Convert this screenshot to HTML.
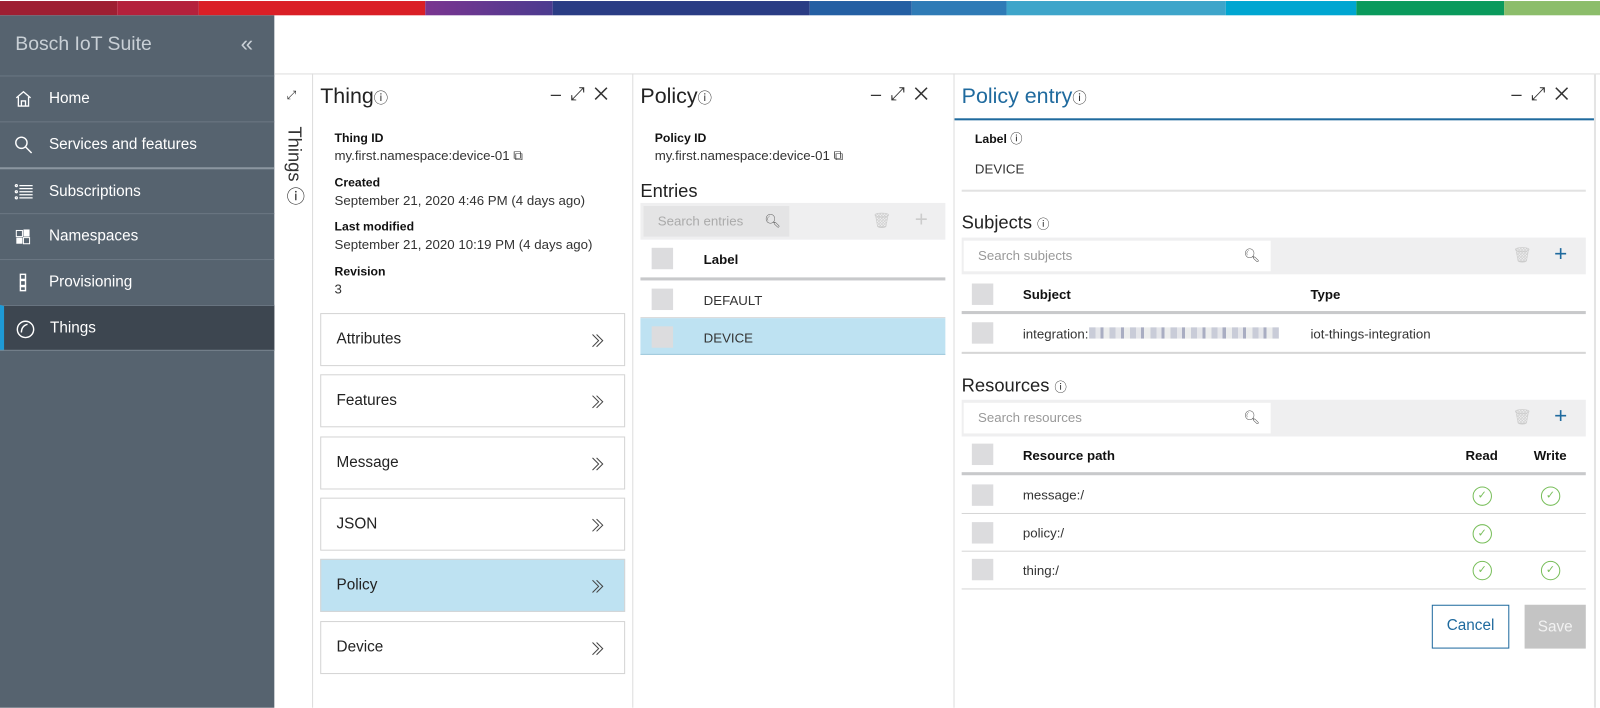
<!DOCTYPE html>
<html><head><meta charset="utf-8"><style>
*{box-sizing:border-box;margin:0;padding:0}
html,body{width:1600px;height:708px;overflow:hidden;background:#fff;font-family:"Liberation Sans",sans-serif;color:#222}
#w{position:absolute;left:0;top:0;width:1569px;height:694px;transform:scale(1.0198);transform-origin:0 0}
.a{position:absolute}
.bar div{position:absolute;top:1px;height:14px}
.nav{position:absolute;left:0;width:269px;height:45px;border-top:1px solid #6b7783;color:#fff;font-size:15px;line-height:44px;padding-left:48px}
.nav svg{position:absolute;left:14px;top:13px}
.lbl{font-size:12px;font-weight:bold;color:#111}
.val{font-size:13px;color:#333}
.card{position:absolute;left:314px;width:299px;height:52px;border:1px solid #d4d4d4;font-size:15px;line-height:50px;padding-left:15px;color:#222}
.card svg{position:absolute;right:20px;top:19px}
.hdr{font-size:21px;color:#222}
.ic{font-size:14px;color:#333}
.cb{position:absolute;width:21px;height:21px;background:#dcdcde}
.srch{position:absolute;background:#fff;height:30px;font-size:13px;color:#999;line-height:30px;padding-left:14px}
.th{font-size:13px;font-weight:bold;color:#111}
.td{font-size:13px;color:#333}
.hl{position:absolute;height:1px;background:#d6d6d6}
.ok{position:absolute;width:19px;height:19px;border:1.5px solid #78be5a;border-radius:50%;color:#78be5a;font-size:11px;text-align:center;line-height:16px}
</style></head><body><div id="w">
<div class="bar">
<div style="left:0;width:115px;background:#9e1f32"></div>
<div style="left:115px;width:80px;background:#b4213c"></div>
<div style="left:195px;width:222px;background:#da1f26"></div>
<div style="left:417px;width:125px;background:linear-gradient(90deg,#7a3590,#4b3b8f)"></div>
<div style="left:542px;width:252px;background:#2a3c84"></div>
<div style="left:794px;width:100px;background:#245fa3"></div>
<div style="left:894px;width:93px;background:#2f7bb6"></div>
<div style="left:987px;width:215px;background:#3ea5ca"></div>
<div style="left:1202px;width:128px;background:#00a6d1"></div>
<div style="left:1330px;width:145px;background:#0a9a5c"></div>
<div style="left:1475px;width:94px;background:#8cbd6b"></div>
</div>
<div class="a" style="left:0;top:15px;width:269px;height:679px;background:#56636f"></div>
<div class="a" style="left:15px;top:33px;font-size:19px;color:#c9d0d6">Bosch IoT Suite</div>
<div class="a" style="left:236px;top:30px;font-size:22px;color:#c9d0d6">«</div>
<div class="nav" style="top:74px"><svg width="18" height="18" viewBox="0 0 18 18" fill="none" stroke="#fff" stroke-width="1.3"><path d="M2 8L9 2l7 6M4 7v9h10V7M7 16v-5h4v5"/></svg>Home</div>
<div class="nav" style="top:119px"><svg width="20" height="20" viewBox="0 0 20 20" fill="none" stroke="#fff" stroke-width="1.4"><circle cx="7" cy="7" r="5.5"/><path d="M11 11l6 6"/></svg>Services and features</div>
<div class="nav" style="top:164px;border-top:2px solid #8b96a0"><svg width="20" height="18" viewBox="0 0 20 18" fill="none" stroke="#fff" stroke-width="1.2"><circle cx="2" cy="3" r="1"/><circle cx="2" cy="9" r="1"/><circle cx="2" cy="15" r="1"/><path d="M5 3h13M5 6h13M5 9h13M5 12h13M5 15h13"/></svg>Subscriptions</div>
<div class="nav" style="top:209px"><svg width="18" height="18" viewBox="0 0 18 18" fill="#fff"><rect x="2" y="3" width="6" height="6" fill="none" stroke="#fff"/><rect x="9" y="2" width="6" height="7"/><rect x="2" y="10" width="6" height="6"/><rect x="9" y="10" width="6" height="6" fill="none" stroke="#fff"/></svg>Namespaces</div>
<div class="nav" style="top:254px"><svg width="18" height="18" viewBox="0 0 18 18" fill="none" stroke="#fff" stroke-width="1.4"><rect x="6" y="1" width="5" height="5"/><rect x="6" y="7" width="5" height="5"/><rect x="6" y="13" width="5" height="4"/></svg>Provisioning</div>
<div class="nav" style="top:299px;background:#3d4650;border-left:4px solid #1e9ad6;padding-left:45px"><svg width="20" height="20" viewBox="0 0 20 20" fill="none" stroke="#fff" stroke-width="1.4" style="left:11px"><circle cx="10" cy="10" r="8"/><path d="M6 13c0-4 2-7 6-8"/></svg>Things</div>
<div class="a" style="left:0;top:343px;width:269px;height:1px;background:#7d8994"></div>
<div class="a" style="left:269px;top:72px;width:1300px;height:1px;background:#ddd"></div>
<div class="a" style="left:306px;top:72px;width:1px;height:622px;background:#ddd"></div>
<div class="a" style="left:620px;top:72px;width:1px;height:622px;background:#ddd"></div>
<div class="a" style="left:935px;top:72px;width:1px;height:622px;background:#ddd"></div>
<div class="a" style="left:1563px;top:72px;width:2px;height:622px;background:#e4e4e4"></div>
<div class="a" style="left:281px;top:86px;font-size:12px;color:#333">⤢</div>
<div class="a" style="left:276px;top:124px;font-size:18px;color:#333;writing-mode:vertical-rl">Things ⓘ</div>
<div class="a hdr" style="left:314px;top:83px">Thing<span class="ic">ⓘ</span></div>
<div class="a" style="left:540px;top:82px;font-size:18px;color:#333;letter-spacing:9px">–⤢✕</div>
<div class="a lbl" style="left:328px;top:128px">Thing ID</div>
<div class="a val" style="left:328px;top:145px">my.first.namespace:device-01 ⧉</div>
<div class="a lbl" style="left:328px;top:172px">Created</div>
<div class="a val" style="left:328px;top:189px">September 21, 2020 4:46 PM (4 days ago)</div>
<div class="a lbl" style="left:328px;top:215px">Last modified</div>
<div class="a val" style="left:328px;top:232px">September 21, 2020 10:19 PM (4 days ago)</div>
<div class="a lbl" style="left:328px;top:259px">Revision</div>
<div class="a val" style="left:328px;top:276px">3</div>
<div class="card" style="top:307px">Attributes<svg width="12" height="14" viewBox="0 0 12 14" fill="none" stroke="#444"><path d="M1 1l6 6-6 6M5 1l6 6-6 6"/></svg></div>
<div class="card" style="top:367px">Features<svg width="12" height="14" viewBox="0 0 12 14" fill="none" stroke="#444"><path d="M1 1l6 6-6 6M5 1l6 6-6 6"/></svg></div>
<div class="card" style="top:428px">Message<svg width="12" height="14" viewBox="0 0 12 14" fill="none" stroke="#444"><path d="M1 1l6 6-6 6M5 1l6 6-6 6"/></svg></div>
<div class="card" style="top:488px">JSON<svg width="12" height="14" viewBox="0 0 12 14" fill="none" stroke="#444"><path d="M1 1l6 6-6 6M5 1l6 6-6 6"/></svg></div>
<div class="card" style="top:548px;background:#bee2f2">Policy<svg width="12" height="14" viewBox="0 0 12 14" fill="none" stroke="#444"><path d="M1 1l6 6-6 6M5 1l6 6-6 6"/></svg></div>
<div class="card" style="top:609px">Device<svg width="12" height="14" viewBox="0 0 12 14" fill="none" stroke="#444"><path d="M1 1l6 6-6 6M5 1l6 6-6 6"/></svg></div>
<div class="a hdr" style="left:628px;top:83px">Policy<span class="ic">ⓘ</span></div>
<div class="a" style="left:854px;top:82px;font-size:18px;color:#333;letter-spacing:9px">–⤢✕</div>
<div class="a lbl" style="left:642px;top:128px">Policy ID</div>
<div class="a val" style="left:642px;top:145px">my.first.namespace:device-01 ⧉</div>
<div class="a" style="left:628px;top:177px;font-size:18px">Entries</div>
<div class="a" style="left:628px;top:199px;width:299px;height:36px;background:#efeff0"></div>
<div class="srch" style="left:631px;top:202px;width:143px;background:#e4e4e5;color:#aaa">Search entries <span style="position:absolute;right:8px;color:#666">🔍︎</span></div>
<div class="a" style="left:855px;top:207px;font-size:15px;color:#ccc">🗑︎</div>
<div class="a" style="left:897px;top:202px;font-size:22px;color:#ccc">+</div>
<div class="cb" style="left:639px;top:243px"></div>
<div class="a th" style="left:690px;top:247px">Label</div>
<div class="a" style="left:628px;top:272px;width:299px;height:3px;background:#c8c9cb"></div>
<div class="cb" style="left:639px;top:283px"></div>
<div class="a td" style="left:690px;top:287px">DEFAULT</div>
<div class="hl" style="left:628px;top:311px;width:299px"></div>
<div class="a" style="left:628px;top:312px;width:299px;height:36px;background:#bee2f2;border-bottom:1px solid #9fc9dc"></div>
<div class="cb" style="left:639px;top:320px"></div>
<div class="a td" style="left:690px;top:324px">DEVICE</div>
<div class="a hdr" style="left:943px;top:83px;color:#1f6a9e">Policy entry<span class="ic" style="color:#333">ⓘ</span></div>
<div class="a" style="left:1482px;top:82px;font-size:18px;color:#333;letter-spacing:9px">–⤢✕</div>
<div class="a" style="left:936px;top:116px;width:627px;height:2px;background:#1f6a9e"></div>
<div class="a lbl" style="left:956px;top:127px">Label <span style="font-weight:normal">ⓘ</span></div>
<div class="a td" style="left:956px;top:158px">DEVICE</div>
<div class="a" style="left:943px;top:186px;width:612px;height:2px;background:#e2e2e2"></div>
<div class="a" style="left:943px;top:208px;font-size:18px">Subjects <span style="font-size:12px">ⓘ</span></div>
<div class="a" style="left:943px;top:233px;width:612px;height:36px;background:#efeff0"></div>
<div class="srch" style="left:945px;top:236px;width:301px">Search subjects <span style="position:absolute;right:10px;color:#555">🔍︎</span></div>
<div class="a" style="left:1483px;top:241px;font-size:15px;color:#ccc">🗑︎</div>
<div class="a" style="left:1524px;top:236px;font-size:22px;color:#1f6a9e">+</div>
<div class="cb" style="left:953px;top:278px"></div>
<div class="a th" style="left:1003px;top:281px">Subject</div>
<div class="a th" style="left:1285px;top:281px">Type</div>
<div class="a" style="left:943px;top:305px;width:612px;height:3px;background:#c8c9cb"></div>
<div class="cb" style="left:953px;top:316px"></div>
<div class="a td" style="left:1003px;top:320px">integration:</div>
<div class="a" style="left:1068px;top:321px;width:186px;height:11px;background:repeating-linear-gradient(90deg,#c9ccd8 0 6px,#e5e6ea 6px 11px,#a9adc2 11px 14px,#eceded 14px 20px)"></div>
<div class="a td" style="left:1285px;top:320px">iot-things-integration</div>
<div class="hl" style="left:943px;top:345px;width:612px;height:2px"></div>
<div class="a" style="left:943px;top:368px;font-size:18px">Resources <span style="font-size:12px">ⓘ</span></div>
<div class="a" style="left:943px;top:392px;width:612px;height:36px;background:#efeff0"></div>
<div class="srch" style="left:945px;top:395px;width:301px">Search resources <span style="position:absolute;right:10px;color:#555">🔍︎</span></div>
<div class="a" style="left:1483px;top:400px;font-size:15px;color:#ccc">🗑︎</div>
<div class="a" style="left:1524px;top:395px;font-size:22px;color:#1f6a9e">+</div>
<div class="cb" style="left:953px;top:435px"></div>
<div class="a th" style="left:1003px;top:439px">Resource path</div>
<div class="a th" style="left:1437px;top:439px">Read</div>
<div class="a th" style="left:1504px;top:439px">Write</div>
<div class="a" style="left:943px;top:463px;width:612px;height:3px;background:#c8c9cb"></div>
<div class="cb" style="left:953px;top:475px"></div><div class="a td" style="left:1003px;top:478px">message:/</div>
<div class="ok" style="left:1444px;top:477px">✓</div><div class="ok" style="left:1511px;top:477px">✓</div>
<div class="hl" style="left:943px;top:503px;width:612px"></div>
<div class="cb" style="left:953px;top:512px"></div><div class="a td" style="left:1003px;top:515px">policy:/</div>
<div class="ok" style="left:1444px;top:514px">✓</div>
<div class="hl" style="left:943px;top:540px;width:612px"></div>
<div class="cb" style="left:953px;top:548px"></div><div class="a td" style="left:1003px;top:552px">thing:/</div>
<div class="ok" style="left:1444px;top:550px">✓</div><div class="ok" style="left:1511px;top:550px">✓</div>
<div class="hl" style="left:943px;top:577px;width:612px"></div>
<div class="a" style="left:1404px;top:593px;width:76px;height:43px;border:1.5px solid #1f6a9e;color:#1f6a9e;font-size:15px;text-align:center;line-height:40px">Cancel</div>
<div class="a" style="left:1495px;top:593px;width:60px;height:43px;background:#c4c4c4;color:#f2f2f2;font-size:15px;text-align:center;line-height:43px">Save</div>
</div></body></html>
